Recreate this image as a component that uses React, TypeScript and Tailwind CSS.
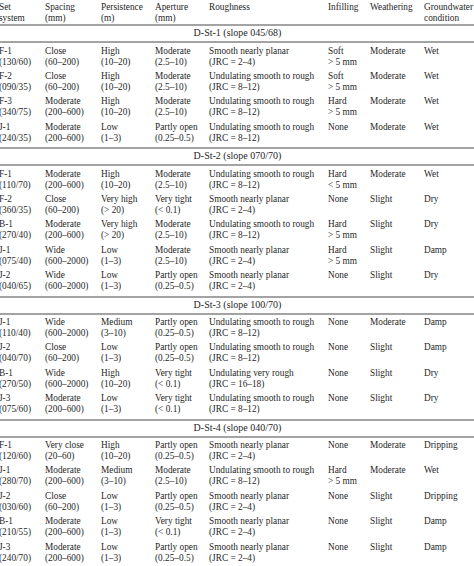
import React from 'react'

type Section = { title: string; rows: string[][] }

const COLS = 'grid grid-cols-[46px_56px_54px_54px_119px_42px_54px_52px]'

const HEADER = ['Set|system', 'Spacing|(mm)', 'Persistence|(m)', 'Aperture|(mm)', 'Roughness', 'Infilling', 'Weathering', 'Groundwater|condition']

const SMOOTH = 'Smooth nearly planar|(JRC = 2–4)'
const UNDUL = 'Undulating smooth to rough|(JRC = 8–12)'

const SECTIONS: Section[] = [
  {
    title: 'D-St-1 (slope 045/68)',
    rows: [
      ['F-1|(130/60)', 'Close|(60–200)', 'High|(10–20)', 'Moderate|(2.5–10)', SMOOTH, 'Soft|> 5 mm', 'Moderate', 'Wet'],
      ['F-2|(090/35)', 'Close|(60–200)', 'High|(10–20)', 'Moderate|(2.5–10)', UNDUL, 'Soft|> 5 mm', 'Moderate', 'Wet'],
      ['F-3|(340/75)', 'Moderate|(200–600)', 'High|(10–20)', 'Moderate|(2.5–10)', UNDUL, 'Hard|> 5 mm', 'Moderate', 'Wet'],
      ['J-1|(240/35)', 'Moderate|(200–600)', 'Low|(1–3)', 'Partly open|(0.25–0.5)', UNDUL, 'None', 'Moderate', 'Wet'],
    ],
  },
  {
    title: 'D-St-2 (slope 070/70)',
    rows: [
      ['F-1|(110/70)', 'Moderate|(200–600)', 'High|(10–20)', 'Moderate|(2.5–10)', UNDUL, 'Hard|< 5 mm', 'Moderate', 'Wet'],
      ['F-2|(360/35)', 'Close|(60–200)', 'Very high|(> 20)', 'Very tight|(< 0.1)', SMOOTH, 'None', 'Slight', 'Dry'],
      ['B-1|(270/40)', 'Moderate|(200–600)', 'Very high|(> 20)', 'Moderate|(2.5–10)', UNDUL, 'Hard|> 5 mm', 'Slight', 'Dry'],
      ['J-1|(075/40)', 'Wide|(600–2000)', 'Low|(1–3)', 'Moderate|(2.5–10)', SMOOTH, 'Hard|> 5 mm', 'Slight', 'Damp'],
      ['J-2|(040/65)', 'Wide|(600–2000)', 'Low|(1–3)', 'Partly open|(0.25–0.5)', SMOOTH, 'None', 'Slight', 'Dry'],
    ],
  },
  {
    title: 'D-St-3 (slope 100/70)',
    rows: [
      ['J-1|(110/40)', 'Wide|(600–2000)', 'Medium|(3–10)', 'Partly open|(0.25–0.5)', UNDUL, 'None', 'Moderate', 'Damp'],
      ['J-2|(040/70)', 'Close|(60–200)', 'Low|(1–3)', 'Partly open|(0.25–0.5)', UNDUL, 'None', 'Slight', 'Damp'],
      ['B-1|(270/50)', 'Wide|(600–2000)', 'High|(10–20)', 'Very tight|(< 0.1)', 'Undulating very rough|(JRC = 16–18)', 'None', 'Slight', 'Dry'],
      ['J-3|(075/60)', 'Moderate|(200–600)', 'Low|(1–3)', 'Very tight|(< 0.1)', UNDUL, 'None', 'Slight', 'Dry'],
    ],
  },
  {
    title: 'D-St-4 (slope 040/70)',
    rows: [
      ['F-1|(120/60)', 'Very close|(20–60)', 'High|(10–20)', 'Partly open|(0.25–0.5)', SMOOTH, 'None', 'Moderate', 'Dripping'],
      ['J-1|(280/70)', 'Moderate|(200–600)', 'Medium|(3–10)', 'Moderate|(2.5–10)', UNDUL, 'Hard|> 5 mm', 'Moderate', 'Wet'],
      ['J-2|(030/60)', 'Close|(60–200)', 'Low|(1–3)', 'Partly open|(0.25–0.5)', SMOOTH, 'None', 'Slight', 'Dripping'],
      ['B-1|(210/55)', 'Moderate|(200–600)', 'Low|(1–3)', 'Very tight|(< 0.1)', SMOOTH, 'None', 'Slight', 'Damp'],
      ['J-3|(240/70)', 'Moderate|(200–600)', 'Low|(1–3)', 'Partly open|(0.25–0.5)', SMOOTH, 'None', 'Slight', 'Damp'],
    ],
  },
]

function Cell({ text }: { text: string }) {
  return (
    <div className="whitespace-nowrap">
      {text.split('|').map((line, i) => (
        <div key={i}>{line}</div>
      ))}
    </div>
  )
}

function Rule() {
  return <div className="h-[2px] bg-[#a3a3a3]" />
}

export default function App() {
  return (
    <div className="w-[474px] h-[566px] overflow-hidden bg-white">
      <div className="ml-[-1px] w-[477px] font-['Liberation_Serif',serif] text-[9.3px] leading-[11px] text-[#1f1f1f]">
        <div className={`${COLS} pt-[1.5px] pb-[0.5px]`}>
          {HEADER.map((h, i) => (
            <Cell key={i} text={h} />
          ))}
        </div>
        <Rule />
        {SECTIONS.map((s) => (
          <div key={s.title}>
            <div className="pt-[1px] pb-[3px] text-center text-[10px]">{s.title}</div>
            <Rule />
            <div className="pb-[2.5px]">
              {s.rows.map((r, i) => (
                <div key={i} className={`${COLS} h-[25.4px] pt-[2.5px]`}>
                  {r.map((c, j) => (
                    <Cell key={j} text={c} />
                  ))}
                </div>
              ))}
            </div>
            <Rule />
          </div>
        ))}
      </div>
    </div>
  )
}
